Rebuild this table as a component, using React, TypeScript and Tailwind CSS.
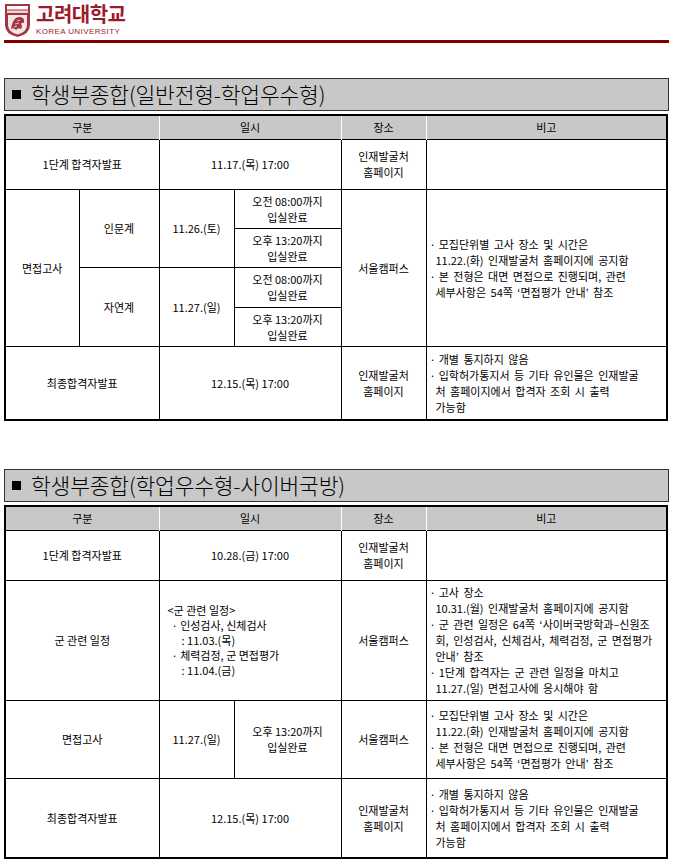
import React from 'react';

const font = { fontFamily: '"Noto Sans CJK KR", "Noto Sans", sans-serif' };

const Logo: React.FC = () => (
  <div className="flex items-center gap-[5px] pl-[4px] pt-[3px]">
    <svg width="27" height="35" viewBox="0 0 27 35">
      <path d="M1 1 H26 V22 Q26 31 13.5 34 Q1 31 1 22 Z" fill="#a4343f" />
      <rect x="3" y="3" width="21" height="3.5" fill="#fff" />
      <rect x="3" y="7.5" width="21" height="2.5" fill="#fff" opacity="0.8" />
      <path d="M4 12 H23 V22 Q23 29 13.5 31.5 Q4 29 4 22 Z" fill="#f3e6e6" />
      <path d="M7 26 Q8 18 12 15 Q16 13 19 15 Q21 17 20 20 Q18 19 17 21 Q19 23 17 26 Q14 24 12 27 Q10 24 7 26 Z" fill="#a4343f" />
      <path d="M13 18 L16 17 M11 21 L15 20 M10 24 L13 23" stroke="#f3e6e6" strokeWidth="0.8" />
    </svg>
    <div className="flex flex-col -mt-[2px]">
      <span className="text-[20px] leading-[21px] font-bold text-[#9b1b2b] tracking-[-0.5px]" style={font}>고려대학교</span>
      <span className="text-[8px] leading-[9px] text-[#9b1b2b] mt-[3px] tracking-[0.4px]" style={{ fontFamily: '"Liberation Sans", sans-serif' }}>
        KOREA UNIVERSITY
      </span>
    </div>
  </div>
);

const Td: React.FC<{ children?: React.ReactNode; rowSpan?: number; colSpan?: number; className?: string }> = ({
  children,
  rowSpan,
  colSpan,
  className = '',
}) => (
  <td rowSpan={rowSpan} colSpan={colSpan} className={`border border-black align-middle text-center leading-[16px] ${className}`}>
    {children}
  </td>
);

const Notes: React.FC<{ items: string[][] }> = ({ items }) => (
  <div className="text-left px-[3px] leading-[16px] [word-spacing:2px]">
    {items.map((lines, i) => (
      <div key={i}>
        {lines.map((l, j) => (
          <div key={j} className={j === 0 ? '' : 'pl-[6px]'}>
            {j === 0 && <span className="mr-[3px]">·</span>}
            {l}
          </div>
        ))}
      </div>
    ))}
  </div>
);

const Title: React.FC<{ text: string }> = ({ text }) => (
  <div className="mx-[4px] h-[33px] border border-[#333] bg-[#c8c8c8] flex items-center pl-[7px] text-[21.5px] text-black" style={font}>
    <span className="inline-block w-[9px] h-[9px] bg-black mr-[10px]" />
    <span className="tracking-[-0.2px] font-light">{text}</span>
  </div>
);

const Head: React.FC = () => (
  <tr className="h-[24px] bg-[#c8c8c8]">
    <th colSpan={2} className="font-normal border-t-2 border-black border-r border-r-white">구분</th>
    <th colSpan={2} className="font-normal border-t-2 border-black border-r border-r-white">일시</th>
    <th className="font-normal border-t-2 border-black border-r border-r-white">장소</th>
    <th className="font-normal border-t-2 border-black">비고</th>
  </tr>
);

const Cols: React.FC = () => (
  <colgroup>
    <col className="w-[74px]" />
    <col className="w-[80px]" />
    <col className="w-[75px]" />
    <col className="w-[107px]" />
    <col className="w-[85px]" />
    <col />
  </colgroup>
);

const interviewNotes = [
  ['모집단위별 고사 장소 및 시간은', '11.22.(화) 인재발굴처 홈페이지에 공지함'],
  ['본 전형은 대면 면접으로 진행되며, 관련', '세부사항은 54쪽 ‘면접평가 안내’ 참조'],
];

const finalNotes = [
  ['개별 통지하지 않음'],
  ['입학허가통지서 등 기타 유인물은 인재발굴', '처 홈페이지에서 합격자 조회 시 출력', '가능함'],
];

const Office = () => (
  <>
    인재발굴처
    <br />
    홈페이지
  </>
);

const Slot: React.FC<{ t: string }> = ({ t }) => (
  <>
    {t}
    <br />
    입실완료
  </>
);

export default function App() {
  return (
    <div className="w-[673px] min-h-[866px] bg-white text-black text-[11px]" style={font}>
      <Logo />
      <div className="mx-[4px] mt-[2px] h-[3px] bg-[#800000]" />

      <div className="mt-[35px]">
        <Title text="학생부종합(일반전형-학업우수형)" />
        <table className="mt-[3px] ml-[4px] w-[664px] table-fixed border-collapse border-2 border-black">
          <Cols />
          <thead>
            <Head />
          </thead>
          <tbody>
            <tr className="h-[50px]">
              <Td colSpan={2}>1단계 합격자발표</Td>
              <Td colSpan={2}>11.17.(목) 17:00</Td>
              <Td><Office /></Td>
              <Td />
            </tr>
            <tr className="h-[39px]">
              <Td rowSpan={4}>면접고사</Td>
              <Td rowSpan={2}>인문계</Td>
              <Td rowSpan={2}>11.26.(토)</Td>
              <Td><Slot t="오전 08:00까지" /></Td>
              <Td rowSpan={4}>서울캠퍼스</Td>
              <Td rowSpan={4}><Notes items={interviewNotes} /></Td>
            </tr>
            <tr className="h-[39px]">
              <Td><Slot t="오후 13:20까지" /></Td>
            </tr>
            <tr className="h-[40px]">
              <Td rowSpan={2}>자연계</Td>
              <Td rowSpan={2}>11.27.(일)</Td>
              <Td><Slot t="오전 08:00까지" /></Td>
            </tr>
            <tr className="h-[39px]">
              <Td><Slot t="오후 13:20까지" /></Td>
            </tr>
            <tr className="h-[74px]">
              <Td colSpan={2}>최종합격자발표</Td>
              <Td colSpan={2}>12.15.(목) 17:00</Td>
              <Td><Office /></Td>
              <Td><Notes items={finalNotes} /></Td>
            </tr>
          </tbody>
        </table>
      </div>

      <div className="mt-[48px]">
        <Title text="학생부종합(학업우수형-사이버국방)" />
        <table className="mt-[3px] ml-[4px] w-[664px] table-fixed border-collapse border-2 border-black">
          <Cols />
          <thead>
            <Head />
          </thead>
          <tbody>
            <tr className="h-[50px]">
              <Td colSpan={2}>1단계 합격자발표</Td>
              <Td colSpan={2}>10.28.(금) 17:00</Td>
              <Td><Office /></Td>
              <Td />
            </tr>
            <tr className="h-[120px]">
              <Td colSpan={2}>군 관련 일정</Td>
              <Td colSpan={2} className="text-left">
                <div className="pl-[8px] leading-[15px]">
                  <div>&lt;군 관련 일정&gt;</div>
                  <div className="pl-[4px]">· 인성검사, 신체검사</div>
                  <div className="pl-[14px]">: 11.03.(목)</div>
                  <div className="pl-[4px]">· 체력검정, 군 면접평가</div>
                  <div className="pl-[14px]">: 11.04.(금)</div>
                </div>
              </Td>
              <Td>서울캠퍼스</Td>
              <Td>
                <Notes
                  items={[
                    ['고사 장소', '10.31.(월) 인재발굴처 홈페이지에 공지함'],
                    ['군 관련 일정은 64쪽 ‘사이버국방학과–신원조', '회, 인성검사, 신체검사, 체력검정, 군 면접평가', '안내’ 참조'],
                    ['1단계 합격자는 군 관련 일정을 마치고', '11.27.(일) 면접고사에 응시해야 함'],
                  ]}
                />
              </Td>
            </tr>
            <tr className="h-[78px]">
              <Td colSpan={2}>면접고사</Td>
              <Td>11.27.(일)</Td>
              <Td><Slot t="오후 13:20까지" /></Td>
              <Td>서울캠퍼스</Td>
              <Td><Notes items={interviewNotes} /></Td>
            </tr>
            <tr className="h-[80px]">
              <Td colSpan={2}>최종합격자발표</Td>
              <Td colSpan={2}>12.15.(목) 17:00</Td>
              <Td><Office /></Td>
              <Td><Notes items={finalNotes} /></Td>
            </tr>
          </tbody>
        </table>
      </div>
    </div>
  );
}
